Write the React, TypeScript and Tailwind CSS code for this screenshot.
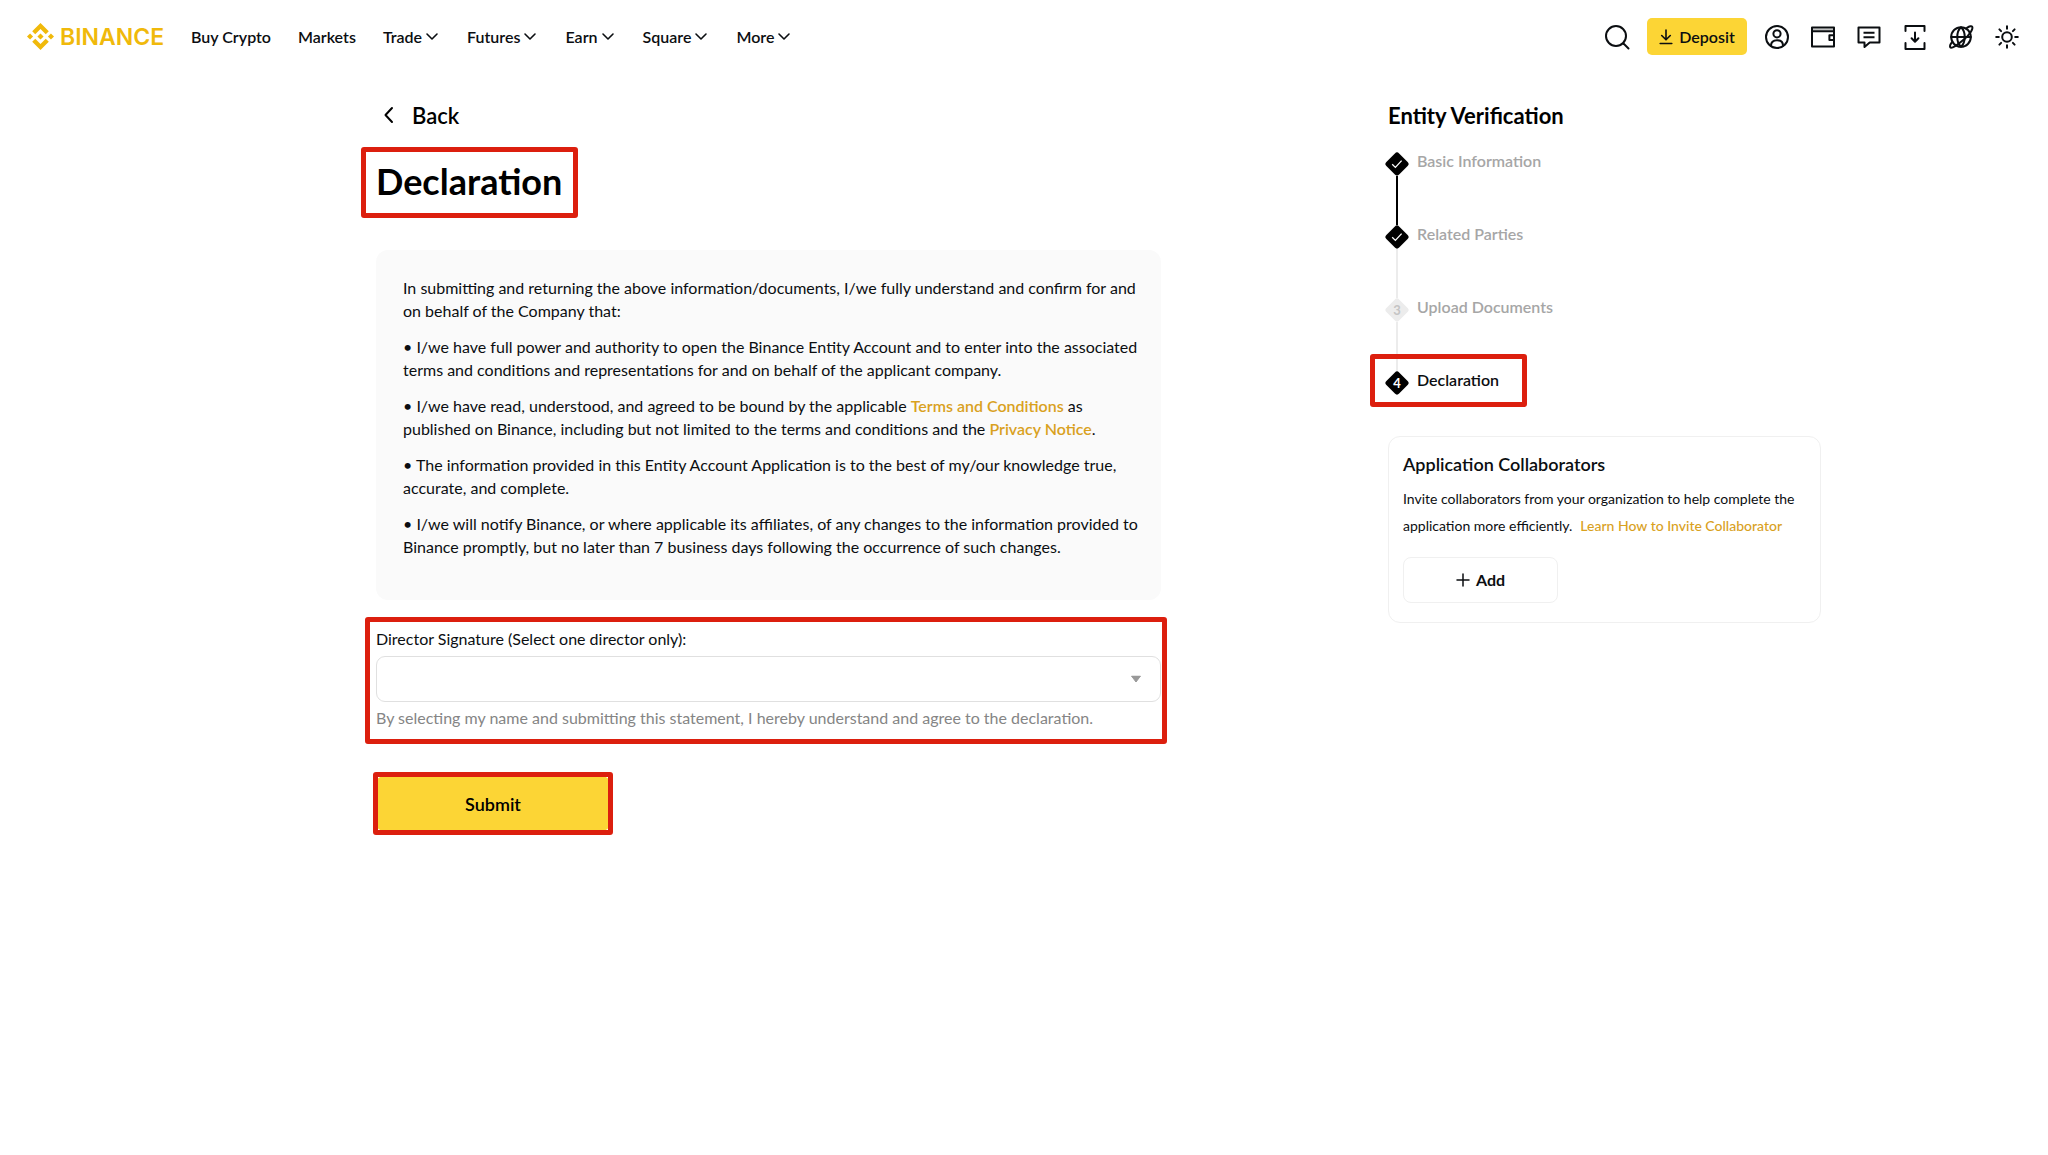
import React from 'react';

const stroke = {
  fill: 'none',
  stroke: 'currentColor',
  strokeWidth: 2,
  strokeLinecap: 'round' as const,
  strokeLinejoin: 'round' as const,
};

function Highlight({ className }: { className: string }) {
  return (
    <span
      aria-hidden="true"
      className={`pointer-events-none absolute rounded-[3px] border-[5px] border-[#dc1f0e] ${className}`}
    />
  );
}

function Logo() {
  return (
    <a href="#home" aria-label="Binance" className="flex items-center gap-1.5 text-[#f0b90b]">
      <svg viewBox="0 0 126.61 126.61" className="size-[27px]" fill="currentColor" aria-hidden="true">
        <path d="M38.73 53.2 63.3 28.62l24.59 24.59 14.3-14.3L63.3 0 24.43 38.9z" />
        <path d="m0 63.31 14.3-14.31 14.31 14.31-14.31 14.3z" />
        <path d="M38.73 73.41 63.3 98l24.59-24.6 14.31 14.29L63.3 126.61 24.41 87.72z" />
        <path d="m98 63.31 14.3-14.31 14.31 14.3-14.31 14.32z" />
        <path d="M77.83 63.3 63.3 48.78 52.56 59.51l-1.24 1.23-2.54 2.54 14.52 14.53z" />
      </svg>
      <span className="font-[Inter,sans-serif] text-[23px] leading-6 font-semibold">BINANCE</span>
    </a>
  );
}

function NavItem({ label, menu }: { label: string; menu?: boolean }) {
  if (!menu) {
    return <a href={`#${label.toLowerCase().replace(' ', '-')}`}>{label}</a>;
  }
  return (
    <button type="button" className="flex items-center gap-0.5">
      {label}
      <svg viewBox="0 0 16 16" className="size-4" {...stroke} strokeWidth={1.6} aria-hidden="true">
        <path d="m3 5 5 5 5-5" />
      </svg>
    </button>
  );
}

function IconButton({ label, children }: { label: string; children: React.ReactNode }) {
  return (
    <button type="button" aria-label={label} className="size-7">
      <svg viewBox="0 0 28 28" className="size-7" {...stroke} aria-hidden="true">
        {children}
      </svg>
    </button>
  );
}

function Header() {
  return (
    <header className="flex h-[73px] items-center justify-between px-[27px]">
      <div className="flex items-center gap-[27px]">
        <Logo />
        <nav className="flex items-center gap-[27px] font-semibold">
          <NavItem label="Buy Crypto" />
          <NavItem label="Markets" />
          <NavItem label="Trade" menu />
          <NavItem label="Futures" menu />
          <NavItem label="Earn" menu />
          <NavItem label="Square" menu />
          <NavItem label="More" menu />
        </nav>
      </div>
      <div className="flex items-center gap-4">
        <IconButton label="Search">
          <circle cx="13" cy="13" r="10" />
          <path d="m20.500 20.500 5 5" />
        </IconButton>
        <button
          type="button"
          className="flex h-[37px] w-[100px] items-center justify-center gap-1.5 rounded-[5px] bg-[#fcd535] font-semibold"
        >
          <svg viewBox="0 0 14 16" className="h-4 w-3.5" {...stroke} strokeWidth={1.6} aria-hidden="true">
            <path d="M7 1v9.500M2.700 6.500 7 10.800l4.300-4.300M1.200 14.500h11.600" />
          </svg>
          Deposit
        </button>
        <div className="flex items-center gap-[18px]">
          <IconButton label="Account">
            <circle cx="14" cy="14" r="11" />
            <circle cx="14" cy="10.800" r="3.600" />
            <path d="M8 22.800c0-3.800 2.600-5.600 6-5.600s6 1.800 6 5.600" />
          </IconButton>
          <IconButton label="Wallet">
            <path d="M3 4.500h22v19H3zM3 8.300h22M25 12.300h-4.600v4.600H25" />
            <path d="M4 6.400h20" strokeWidth="1.500" opacity=".25" />
          </IconButton>
          <IconButton label="Messages">
            <path d="M3.500 4.500h21v15h-9.800L9.500 24v-4.500h-6z" />
            <path d="M8.500 9.800h11M8.500 14.300h11" strokeLinecap="butt" />
          </IconButton>
          <IconButton label="Download app">
            <path d="M4.500 8V3h19v5M4.500 20v6h19v-6" />
            <path d="M14 9.500v9M10.600 15.300 14 18.700l3.400-3.400" />
          </IconButton>
          <IconButton label="Language">
            <circle cx="14" cy="14" r="9.800" />
            <path d="M14 4.200c-5 4.500-5 15.100 0 19.600 5-4.500 5-15.100 0-19.600zM4.200 14h19.600" />
            <path d="M20 4.800c2.600-1.700 4.600-2 5.200-1 1.200 2-2.600 8-8.600 13S4.600 26 3.300 24.400c-.7-.9-.1-2.800 1.700-5.200" />
          </IconButton>
          <IconButton label="Theme">
            <circle cx="14" cy="14" r="4.800" />
            <path d="M14 3.200v2.600M14 22.200v2.600M3.200 14h2.600M22.200 14h2.600M6.400 6.400l1.700 1.700M19.900 19.900l1.700 1.700M6.400 21.600l1.700-1.700M19.900 8.100l1.700-1.700" />
          </IconButton>
        </div>
      </div>
    </header>
  );
}

type StepState = 'done' | 'pending' | 'current';

function Marker({ state, number }: { state: StepState; number: number }) {
  const pending = state === 'pending';
  return (
    <svg viewBox="0 0 24 24" className="size-6 shrink-0" aria-hidden="true">
      <rect
        x="3"
        y="3"
        width="18"
        height="18"
        rx="3"
        transform="rotate(45 12 12)"
        fill={pending ? '#ececec' : '#000'}
      />
      {state === 'done' ? (
        <path d="m7.200 12.200 3.200 3.200 6.200-6.800" fill="none" stroke="#fff" strokeWidth="1.300" />
      ) : (
        <text
          x="12"
          y="16.500"
          textAnchor="middle"
          fontSize="13"
          fontWeight="700"
          fontFamily="Lato, sans-serif"
          fill={pending ? '#c4c4c4' : '#fff'}
        >
          {number}
        </text>
      )}
    </svg>
  );
}

const steps: { label: string; state: StepState }[] = [
  { label: 'Basic Information', state: 'done' },
  { label: 'Related Parties', state: 'done' },
  { label: 'Upload Documents', state: 'pending' },
  { label: 'Declaration', state: 'current' },
];

function Steps() {
  return (
    <ol className="mt-[22px] -ml-[3px]">
      {steps.map((step, i) => (
        <li
          key={step.label}
          className={`relative flex w-fit gap-2 font-semibold ${
            i < steps.length - 1 ? 'h-[73px] text-[#a6a6a6]' : 'h-6'
          }`}
        >
          <div className="flex flex-col items-center">
            <Marker state={step.state} number={i + 1} />
            {i < steps.length - 1 && (
              <div className={`w-0.5 grow ${i === 0 ? 'bg-black' : 'bg-[#ececec]'}`} />
            )}
          </div>
          <span className="leading-[18px]">{step.label}</span>
          {step.state === 'current' && (
            <Highlight className="-top-[17px] -right-[28px] -bottom-[12px] -left-[15px]" />
          )}
        </li>
      ))}
    </ol>
  );
}

function Collaborators() {
  return (
    <section className="mt-[41px] rounded-xl border border-[#f0f0f0] px-3.5 pt-[13px] pb-[19px]">
      <h3 className="text-lg leading-7 font-semibold">Application Collaborators</h3>
      <p className="mt-[7px] text-sm leading-[27px]">
        Invite collaborators from your organization to help complete the application more efficiently.
        <a href="#invite" className="ml-2 font-medium text-[#d9a11e]">
          Learn How to Invite Collaborator
        </a>
      </p>
      <button
        type="button"
        className="mt-[18px] flex h-[46px] w-[155px] items-center justify-center gap-1.5 rounded-lg border border-[#f0f0f0] font-bold"
      >
        <svg viewBox="0 0 14 14" className="size-3.5" {...stroke} strokeWidth={1.5} aria-hidden="true">
          <path d="M7 1v12M1 7h12" />
        </svg>
        Add
      </button>
    </section>
  );
}

const link = 'font-semibold text-[#d9a11e]';

export default function App() {
  return (
    <div className="min-h-screen bg-white font-[Lato,sans-serif] text-base text-[#0b0e11]">
      <Header />
      <div className="grid grid-cols-[785fr_433fr] gap-x-[227px] pt-[29px] pr-[227px] pl-[376px]">
        <main>
          <button type="button" className="flex h-[26px] items-center gap-3 text-[22px] font-semibold text-black">
            <svg viewBox="0 0 24 24" className="size-6" {...stroke} aria-hidden="true">
              <path d="m16 5-6.500 7L16 19" />
            </svg>
            Back
          </button>
          <div className="relative mt-[31px] w-fit">
            <h1 className="text-4xl leading-[44px] font-bold text-black">Declaration</h1>
            <Highlight className="-top-[12px] -right-[16px] -bottom-[15px] -left-[15px]" />
          </div>

          <section className="mt-[47px] space-y-[13px] rounded-xl bg-[#fafafa] pt-[26px] pr-4 pb-[42px] pl-[27px] leading-[23px]">
            <p>
              In submitting and returning the above information/documents, I/we fully understand and confirm for
              and on behalf of the Company that:
            </p>
            <p>
              • I/we have full power and authority to open the Binance Entity Account and to enter into the
              associated terms and conditions and representations for and on behalf of the applicant company.
            </p>
            <p>
              • I/we have read, understood, and agreed to be bound by the applicable{' '}
              <a href="#terms" className={link}>
                Terms and Conditions
              </a>{' '}
              as published on Binance, including but not limited to the terms and conditions and the{' '}
              <a href="#privacy" className={link}>
                Privacy Notice
              </a>
              .
            </p>
            <p>
              • The information provided in this Entity Account Application is to the best of my/our knowledge
              true, accurate, and complete.
            </p>
            <p>
              • I/we will notify Binance, or where applicable its affiliates, of any changes to the information
              provided to Binance promptly, but no later than 7 business days following the occurrence of such
              changes.
            </p>
          </section>

          <form onSubmit={(e) => e.preventDefault()}>
            <div className="relative mt-7">
              <label htmlFor="director" className="block leading-[22px]">
                Director Signature (Select one director only):
              </label>
              <div className="relative mt-1.5">
                <select
                  id="director"
                  defaultValue=""
                  aria-describedby="director-help"
                  className="block h-[46px] w-full appearance-none rounded-[9px] border border-[#e0e0e0] bg-white px-4"
                >
                  <option value="" />
                </select>
                <svg
                  viewBox="0 0 10 7"
                  className="pointer-events-none absolute top-1/2 right-5 h-[7px] w-2.5 -translate-y-1/2"
                  aria-hidden="true"
                >
                  <path d="M.500.500h9L5 6.500z" fill="#999" stroke="#999" strokeLinejoin="round" />
                </svg>
              </div>
              <p id="director-help" className="mt-1 text-[#858585]">
                By selecting my name and submitting this statement, I hereby understand and agree to the declaration.
              </p>
              <Highlight className="-top-[11px] -right-[6px] -bottom-[14px] -left-[11px]" />
            </div>
            <div className="relative mt-[46px] w-[234px]">
              <button type="submit" className="h-[55px] w-full rounded-lg bg-[#fcd535] text-lg font-semibold text-black">
                Submit
              </button>
              <Highlight className="-inset-x-[3px] -inset-y-1" />
            </div>
          </form>
        </main>

        <aside>
          <h2 className="text-[22px] leading-7 font-bold text-black">Entity Verification</h2>
          <Steps />
          <Collaborators />
        </aside>
      </div>
    </div>
  );
}
